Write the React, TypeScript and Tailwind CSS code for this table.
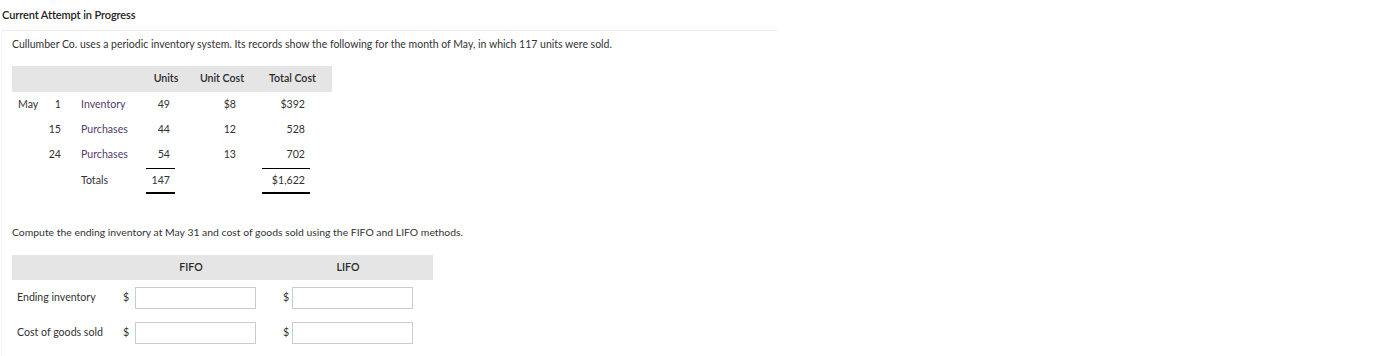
import React from 'react';

const purple = 'text-[#553a6c]';

interface Row {
    month: string;
    day: string;
    label: string;
    units: string;
    unitCost: string;
    total: string;
    height: string;
}

const rows: Row[] = [
    { month: 'May', day: '1', label: 'Inventory', units: '49', unitCost: '$8', total: '$392', height: 'h-[25px]' },
    { month: '', day: '15', label: 'Purchases', units: '44', unitCost: '12', total: '528', height: 'h-[25px]' },
    { month: '', day: '24', label: 'Purchases', units: '54', unitCost: '13', total: '702', height: 'h-[26px]' },
];

const cols = 'grid grid-cols-[29px_26px_74px_50px_62px_79px]';

function MoneyInput() {
    return <input type="text" className="w-[121px] h-[22px] border border-[#cccccc] bg-white outline-none" />;
}

export default function App() {
    return (
        <div className="bg-white min-h-screen text-[#333333] font-['Lato','Open_Sans',sans-serif]">
            {/* Header */}
            <div className="pl-[2px] pt-[7px] h-[30px] text-[11px] font-semibold text-[#222222] tracking-[-0.1px]">
                Current Attempt in Progress
            </div>

            <div className="w-[776px] ml-[1px] border-t border-[#ececec] border-l border-l-[#f4f4f4] pl-[10px] pb-[10px]">
                <p className="text-[10.5px] mt-[6px] h-[14px] leading-[14px]">
                    Cullumber Co. uses a periodic inventory system. Its records show the following for the month of May, in which 117 units were sold.
                </p>

                {/* Inventory records */}
                <div className="mt-[15px] w-[320px] text-[10.6px]">
                    <div className={`${cols} h-[26px] items-center bg-[#e5e5e5] font-semibold text-[#2b2b2b]`}>
                        <span />
                        <span />
                        <span />
                        <span className="text-center">Units</span>
                        <span className="text-center">Unit Cost</span>
                        <span className="text-center">Total Cost</span>
                    </div>
                    {rows.map((r, i) => (
                        <div key={i} className={`${cols} ${r.height} items-center`}>
                            <span className="pl-[6px]">{r.month}</span>
                            <span className="text-right pr-[6px]">{r.day}</span>
                            <span className={`pl-[14px] ${purple}`}>{r.label}</span>
                            <span className="ml-[5px] w-[29px] pr-[5px] text-right">{r.units}</span>
                            <span className="text-right pr-[17px]">{r.unitCost}</span>
                            <span className="ml-[9px] w-[48px] pr-[5px] text-right">{r.total}</span>
                        </div>
                    ))}
                    <div className={`${cols} h-[26px] items-stretch`}>
                        <span />
                        <span />
                        <span className="pl-[14px] flex items-center">Totals</span>
                        <span className="ml-[5px] w-[29px] pr-[5px] flex items-center justify-end border-t border-black border-b-2">147</span>
                        <span />
                        <span className="ml-[9px] w-[48px] pr-[5px] flex items-center justify-end border-t border-black border-b-2">$1,622</span>
                    </div>
                </div>

                <p className="text-[10.4px] mt-[31px] h-[14px] leading-[14px]">
                    Compute the ending inventory at May 31 and cost of goods sold using the FIFO and LIFO methods.
                </p>

                {/* Answer grid */}
                <div className="mt-[16px] w-[421px] text-[10.6px]">
                    <div className="grid grid-cols-[107px_144px_170px] h-[25px] items-center bg-[#e5e5e5] font-semibold text-[#2b2b2b]">
                        <span />
                        <span className="text-center">FIFO</span>
                        <span className="text-center">LIFO</span>
                    </div>
                    {['Ending inventory', 'Cost of goods sold'].map((label) => (
                        <div key={label} className="grid grid-cols-[107px_144px_170px] h-[35px] items-center">
                            <span className="pl-[5px]">{label}</span>
                            <span className="flex items-center">
                                <span className="pl-[4px] w-[16px]">$</span>
                                <MoneyInput />
                            </span>
                            <span className="flex items-center">
                                <span className="pl-[20px] w-[29px]">$</span>
                                <MoneyInput />
                            </span>
                        </div>
                    ))}
                </div>
            </div>
        </div>
    );
}
